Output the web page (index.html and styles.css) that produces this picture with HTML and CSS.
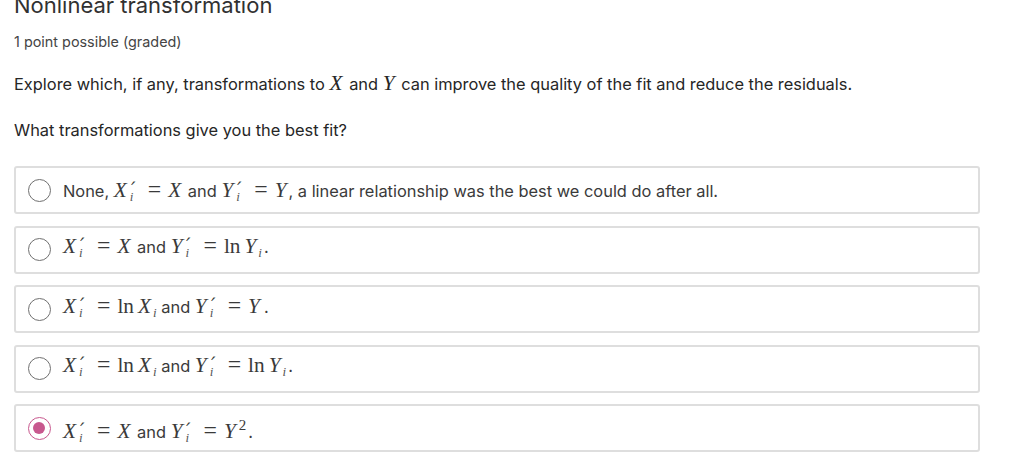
FILE: index.html
```html
<!DOCTYPE html>
<html>
<head>
<meta charset="utf-8">
<link rel="stylesheet" href="styles.css">
</head>
<body>
<div class="problem">
  <h3 class="title">Nonlinear transformation</h3>
  <div class="points">1 point possible (graded)</div>
  <p class="prompt">Explore which, if any, transformations to <i class="mv">X</i> and <i class="mv">Y</i> can improve the quality of the fit and reduce the residuals.</p>
  <p class="prompt">What transformations give you the best fit?</p>
  <div class="choices">
    <label class="choice">
      <span class="radio"></span>
      <span class="ctext">None, <span class="m"><i class="mv">X</i><span class="ss"><span class="sp">′</span><span class="sb">i</span></span><span class="rel">=</span><i class="mv">X</i></span> and <span class="m"><i class="mv">Y</i><span class="ss"><span class="sp">′</span><span class="sb">i</span></span><span class="rel">=</span><i class="mv">Y</i></span>, a linear relationship was the best we could do after all.</span>
    </label>
    <label class="choice">
      <span class="radio"></span>
      <span class="ctext"><span class="m"><i class="mv">X</i><span class="ss"><span class="sp">′</span><span class="sb">i</span></span><span class="rel">=</span><i class="mv">X</i></span> and <span class="m"><i class="mv">Y</i><span class="ss"><span class="sp">′</span><span class="sb">i</span></span><span class="rel">=</span><span class="op">ln</span><i class="mv">Y</i><span class="sbonly">i</span><span class="dot">.</span></span></span>
    </label>
    <label class="choice">
      <span class="radio"></span>
      <span class="ctext"><span class="m"><i class="mv">X</i><span class="ss"><span class="sp">′</span><span class="sb">i</span></span><span class="rel">=</span><span class="op">ln</span><i class="mv">X</i><span class="sbonly">i</span></span> and <span class="m"><i class="mv">Y</i><span class="ss"><span class="sp">′</span><span class="sb">i</span></span><span class="rel">=</span><i class="mv">Y</i><span class="dot">.</span></span></span>
    </label>
    <label class="choice">
      <span class="radio"></span>
      <span class="ctext"><span class="m"><i class="mv">X</i><span class="ss"><span class="sp">′</span><span class="sb">i</span></span><span class="rel">=</span><span class="op">ln</span><i class="mv">X</i><span class="sbonly">i</span></span> and <span class="m"><i class="mv">Y</i><span class="ss"><span class="sp">′</span><span class="sb">i</span></span><span class="rel">=</span><span class="op">ln</span><i class="mv">Y</i><span class="sbonly">i</span><span class="dot">.</span></span></span>
    </label>
    <label class="choice">
      <span class="radio checked"></span>
      <span class="ctext"><span class="m"><i class="mv">X</i><span class="ss"><span class="sp">′</span><span class="sb">i</span></span><span class="rel">=</span><i class="mv">X</i></span> and <span class="m"><i class="mv">Y</i><span class="ss"><span class="sp">′</span><span class="sb">i</span></span><span class="rel">=</span><i class="mv">Y</i><span class="spow">2</span><span class="dot">.</span></span></span>
    </label>
  </div>
</div>
</body>
</html>
```
FILE: styles.css
```css
html, body {
  margin: 0;
  padding: 0;
  background: #fff;
}
body {
  font-family: Inter, "Noto Sans", sans-serif;
  color: #313131;
}
.problem {
  padding: 0 44px 0 14px;
}
.title {
  margin: -7px 0 0;
  font-size: 22px;
  font-weight: 400;
  line-height: 24px;
  color: #313131;
}
.points {
  margin-top: 15px;
  font-size: 14.4px;
  line-height: 20px;
  color: #454545;
}
.prompt {
  margin: 19px 0 0;
  font-size: 16.4px;
  line-height: 24px;
  color: #262626;
}
.prompt + .prompt {
  margin-top: 22px;
}
.mv {
  font-family: "Liberation Serif", "DejaVu Serif", serif;
  font-style: italic;
  font-size: 1.3em;
  padding-right: 2px;
}
.choices {
  margin-top: 24px;
  display: flex;
  flex-direction: column;
  gap: 11.5px;
}
.choice {
  display: flex;
  align-items: center;
  gap: 12px;
  height: 44px;
  padding: 0 12px;
  border: 2px solid #dedede;
  border-radius: 3px;
  font-size: 16.4px;
  color: #3a3a3a;
}
.radio {
  flex: none;
  width: 23px;
  height: 23px;
  border: 1px solid #707070;
  border-radius: 50%;
  box-sizing: border-box;
  position: relative;
}
.radio.checked {
  border: 1.5px solid #c8588e;
}
.radio.checked::after {
  content: "";
  position: absolute;
  left: 4px;
  top: 4px;
  width: 12px;
  height: 12px;
  border-radius: 50%;
  background: #c8588e;
}
.ctext {
  white-space: nowrap;
  line-height: 24px;
}
.m {
  white-space: nowrap;
}
.ss {
  display: inline-block;
  vertical-align: -4px;
  line-height: 1;
  margin-left: 1px;
  margin-right: 1px;
  width: 8px;
}
.sp {
  display: block;
  font-family: "DejaVu Serif", serif;
  font-size: 20px;
  line-height: 6px;
  transform: skewX(-10deg);
}
.sb {
  display: block;
  font-family: "Liberation Serif", "DejaVu Serif", serif;
  font-style: italic;
  font-size: 13px;
  line-height: 9px;
  color: #555;
}
.sbonly {
  font-family: "Liberation Serif", "DejaVu Serif", serif;
  font-style: italic;
  font-size: 13px;
  vertical-align: -4px;
  margin-left: 0;
  color: #555;
}
.spow {
  font-family: "Liberation Serif", "DejaVu Serif", serif;
  font-size: 15px;
  vertical-align: 8px;
  margin-left: 1px;
}
.dot {
  margin-left: 2px;
}
.rel {
  font-family: "Liberation Serif", "DejaVu Serif", serif;
  font-size: 1.45em;
  margin: 0 7px 0 9px;
  line-height: 0;
}
.op {
  font-family: "Liberation Serif", "DejaVu Serif", serif;
  font-size: 1.3em;
  margin-right: 4px;
}
```
